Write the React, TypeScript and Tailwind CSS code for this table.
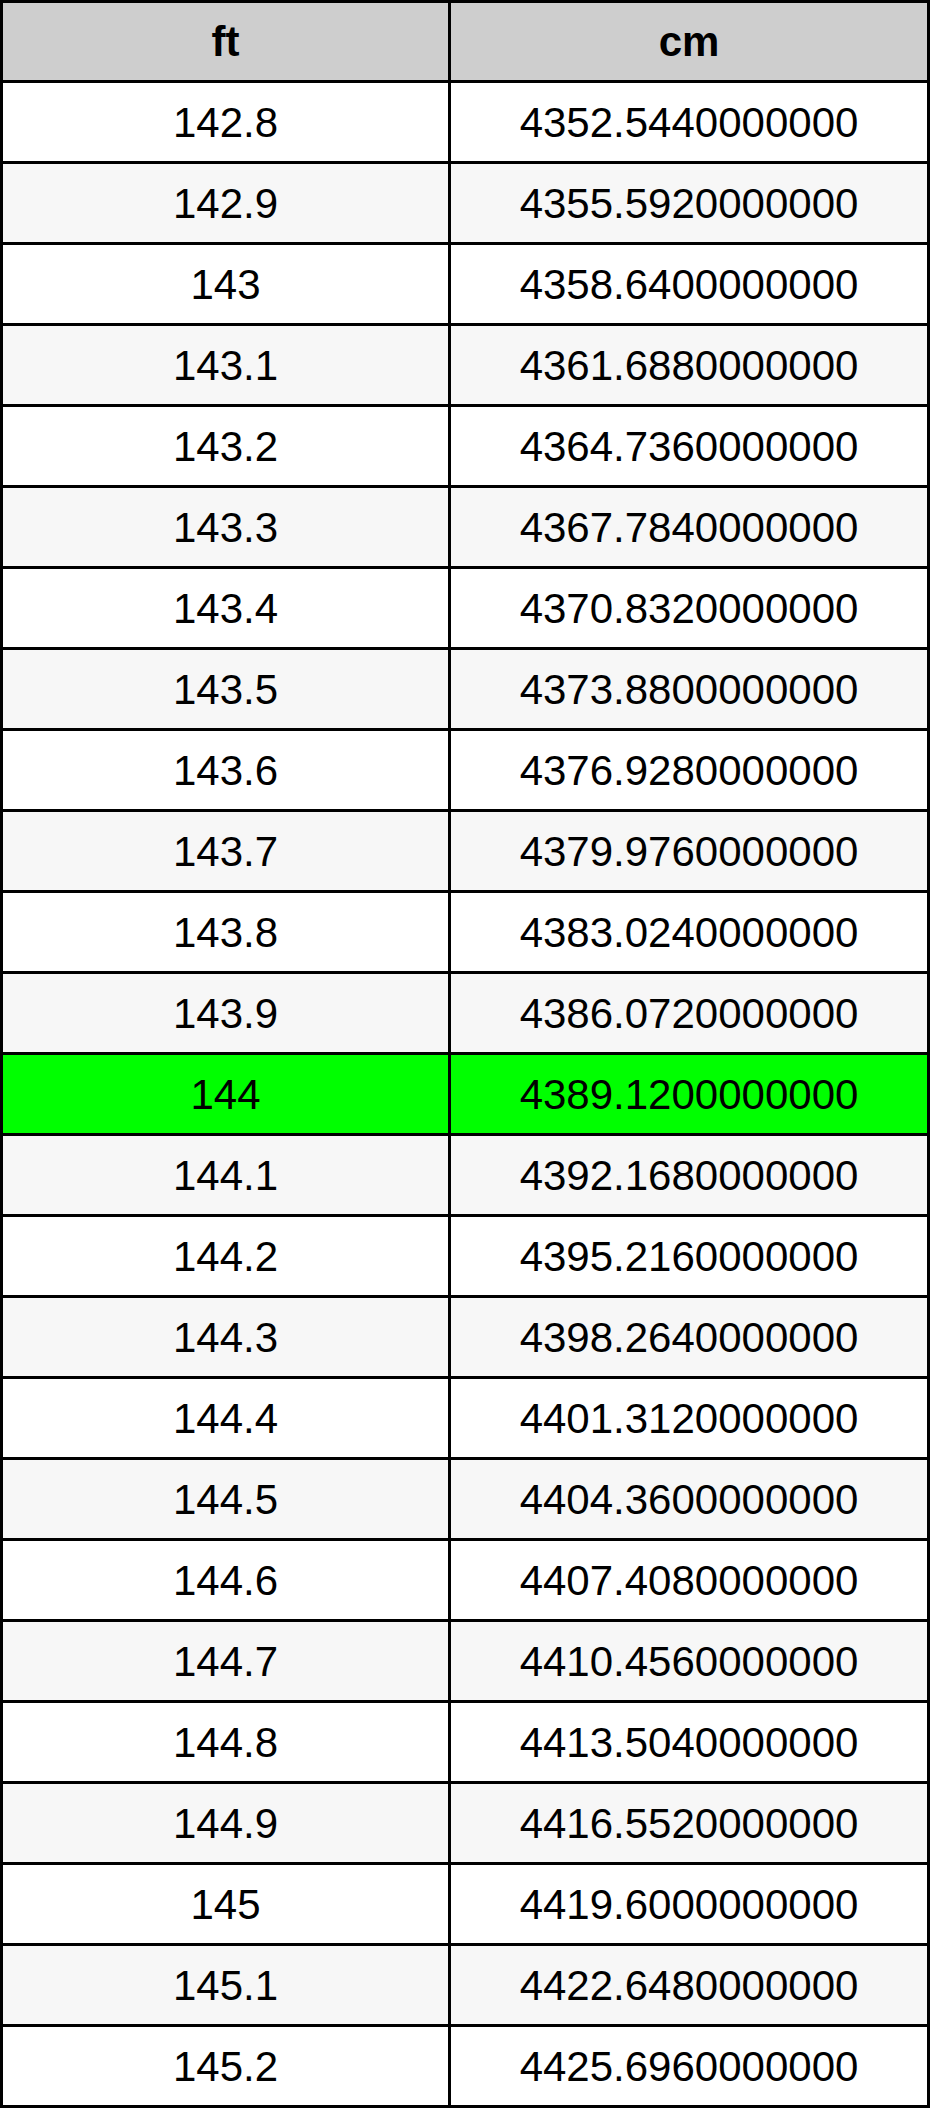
// ft → cm conversion table, 142.8 to 145.2 in 0.1 steps, with 144 highlighted.
const START = 1428; // tenths of a foot
const END = 1452;
const HIGHLIGHT = 1440;

function formatFt(tenths: number) {
  return tenths % 10 === 0 ? String(tenths / 10) : (tenths / 10).toFixed(1);
}

// Stay in integers so no float noise shows up in the long fractional part.
function formatCm(tenths: number) {
  const n = tenths * 3048; // thousandths of a cm
  const whole = Math.floor(n / 1000);
  const frac = String(n % 1000).padStart(3, "0");
  return `${whole}.${frac}0000000`;
}

export default function App() {
  const rows: number[] = [];
  for (let t = START; t <= END; t++) rows.push(t);

  return (
    <div className="w-[930px] bg-white font-['Liberation_Sans',Arial,sans-serif] text-black">
      <div className="border-[3px] border-black">
        <div className="flex h-[77px] bg-[#cecece] text-[42px] font-bold">
          <div className="flex w-[448px] items-center justify-center border-r-[3px] border-black">ft</div>
          <div className="flex flex-1 items-center justify-center">cm</div>
        </div>
        {rows.map((t, i) => {
          const bg = t === HIGHLIGHT ? "bg-[#00ff00]" : i % 2 === 1 ? "bg-[#f7f7f7]" : "bg-white";
          return (
            <div key={t} className={`flex h-[81px] border-t-[3px] border-black text-[42px] ${bg}`}>
              <div className="flex w-[448px] items-center justify-center border-r-[3px] border-black">
                {formatFt(t)}
              </div>
              <div className="flex flex-1 items-center justify-center">{formatCm(t)}</div>
            </div>
          );
        })}
      </div>
    </div>
  );
}
